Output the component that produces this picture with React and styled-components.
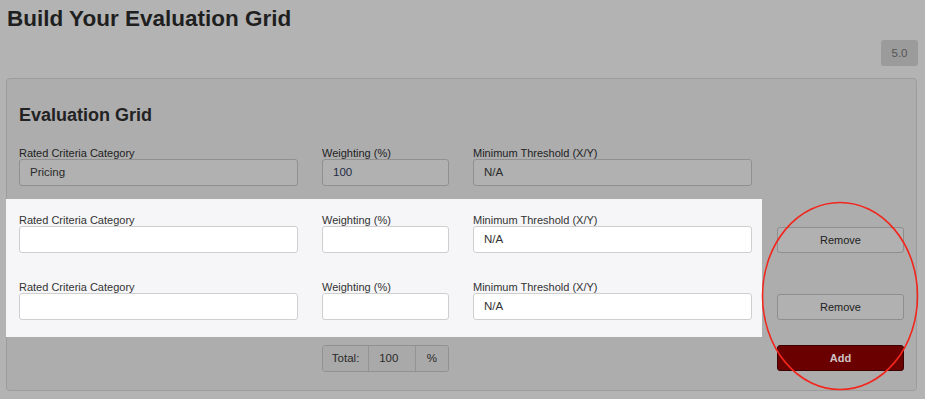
import styled, { createGlobalStyle } from "styled-components";

// page-wide reset, the whole screen sits under a grey tour overlay
const GlobalStyle = createGlobalStyle`
  html, body {
    margin: 0;
    padding: 0;
    background: #b3b3b3;
    font-family: "Liberation Sans", Arial, sans-serif;
  }
  * { box-sizing: border-box; }
`;

const rows = [
  { id: 1, category: "", weight: "" },
  { id: 2, category: "", weight: "" },
];

const App = () => {
  return (
    <Page>
      <GlobalStyle />
      <Title>Build Your Evaluation Grid</Title>
      <TopBar>
        <Version>5.0</Version>
      </TopBar>

      <Panel>
        <Heading>Evaluation Grid</Heading>

        {/* fixed pricing row, read only */}
        <FieldGrid $inset>
          <Field>
            <Label>Rated Criteria Category</Label>
            <Input $locked>Pricing</Input>
          </Field>
          <Field>
            <Label>Weighting (%)</Label>
            <Input $locked $blue>100</Input>
          </Field>
          <Field>
            <Label>Minimum Threshold (X/Y)</Label>
            <Input $locked>N/A</Input>
          </Field>
        </FieldGrid>

        {/* highlighted rows the tour is pointing at */}
        <Band>
          <Spotlight>
            {rows.map((row) => (
              <FieldGrid key={row.id}>
                <Field>
                  <Label $light>Rated Criteria Category</Label>
                  <Input>{row.category}</Input>
                </Field>
                <Field>
                  <Label $light>Weighting (%)</Label>
                  <Input>{row.weight}</Input>
                </Field>
                <Field>
                  <Label $light>Minimum Threshold (X/Y)</Label>
                  <Input>N/A</Input>
                </Field>
              </FieldGrid>
            ))}
          </Spotlight>
          <Actions>
            {rows.map((row) => (
              <Button key={row.id}>Remove</Button>
            ))}
          </Actions>
        </Band>

        <Footer>
          <TotalGroup>
            <TotalCell $w={47}>Total:</TotalCell>
            <TotalCell $w={47} $start>100</TotalCell>
            <TotalCell $w={33}>%</TotalCell>
          </TotalGroup>
          <AddButton>Add</AddButton>
        </Footer>
      </Panel>

      {/* red hand drawn circle over the buttons */}
      <Annotation width="160" height="192" viewBox="0 0 160 192">
        <ellipse cx="80" cy="96" rx="77.5" ry="93.5" fill="none" stroke="#f2261c" strokeWidth="1.6" />
      </Annotation>
    </Page>
  );
};

const Page = styled.div`
  position: relative;
  width: 925px;
  height: 399px;
  overflow: hidden;
  padding: 0 8px 0 6px;
`;

const Title = styled.h1`
  margin: 7px 0 0 1px;
  font-size: 22.5px;
  line-height: 24.75px;
  font-weight: bold;
  color: #1f1f1f;
`;

const TopBar = styled.div`
  display: flex;
  justify-content: flex-end;
  margin-top: 8px;
`;

const Version = styled.span`
  width: 37px;
  height: 26px;
  margin-right: -1px;
  display: flex;
  align-items: center;
  justify-content: center;
  background: #9b9b9b;
  border-radius: 3px;
  font-size: 11.5px;
  color: #555;
`;

const Panel = styled.section`
  margin-top: 12px;
  height: 313px;
  border: 1px solid #9c9c9c;
  border-radius: 4px;
  background: #adadae;
  padding-top: 26px;
`;

const Heading = styled.h3`
  margin: 0 12px 22px;
  font-size: 18px;
  line-height: 20px;
  font-weight: bold;
  color: #222;
`;

const FieldGrid = styled.div`
  display: grid;
  grid-template-columns: 279px 127px 279px;
  column-gap: 24px;
  padding-left: ${(p) => (p.$inset ? "12px" : "0")};
`;

const Field = styled.div`
  display: flex;
  flex-direction: column;
`;

const Label = styled.label`
  font-size: 11px;
  line-height: 12px;
  height: 12px;
  color: ${(p) => (p.$light ? "#333" : "#222")};
  white-space: nowrap;
`;

const Input = styled.div`
  height: 27px;
  display: flex;
  align-items: center;
  padding-left: 10px;
  font-size: 11.5px;
  border-radius: 3px;
  border: 1px solid ${(p) => (p.$locked ? "#909090" : "#cfcfcf")};
  background: ${(p) => (p.$locked ? "#b1b1b1" : "#fff")};
  color: ${(p) => (p.$blue ? "#1f2b44" : p.$locked ? "#2a2a2a" : "#333")};
`;

const Band = styled.div`
  display: flex;
  margin: 13px 0 0 -1px;
`;

const Spotlight = styled.div`
  width: 756px;
  background: #f6f6f8;
  padding: 15px 10px 17px 13px;
  display: flex;
  flex-direction: column;
  gap: 28px;
`;

const Actions = styled.div`
  width: 127px;
  margin-left: 15px;
  padding-top: 28px;
  display: flex;
  flex-direction: column;
  gap: 41px;
`;

const Button = styled.button`
  height: 26px;
  width: 127px;
  padding: 0;
  border: 1px solid #8e8e8e;
  border-radius: 3px;
  background: #b1b1b1;
  font-family: inherit;
  font-size: 11px;
  color: #222;
`;

const Footer = styled.div`
  display: grid;
  grid-template-columns: 127px 127px;
  column-gap: 328px;
  margin: 8px 0 0 315px;
`;

const TotalGroup = styled.div`
  display: flex;
  height: 27px;
  border: 1px solid #919191;
  border-radius: 3px;
  overflow: hidden;
`;

const TotalCell = styled.div`
  width: ${(p) => p.$w}px;
  display: flex;
  align-items: center;
  justify-content: ${(p) => (p.$start ? "flex-start" : "center")};
  padding-left: ${(p) => (p.$start ? "10px" : "0")};
  font-size: 11.5px;
  color: #2a2a2a;
  background: #a9a9a9;
  border-right: 1px solid #939393;

  &:last-child {
    border-right: none;
  }
`;

const AddButton = styled(Button)`
  background: #6a0000;
  border-color: #3c0000;
  color: #cfc4c4;
  font-weight: bold;
`;

const Annotation = styled.svg`
  position: absolute;
  left: 760px;
  top: 200px;
  pointer-events: none;
`;

export default App;
